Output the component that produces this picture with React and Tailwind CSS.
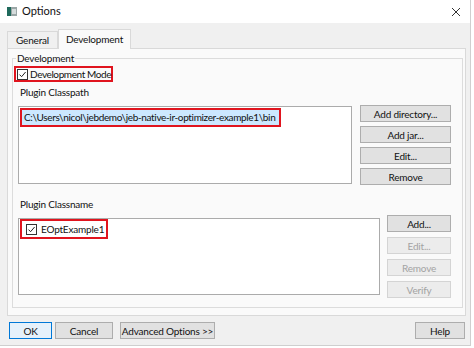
import React from "react";

const font = { fontFamily: 'Lato, "Noto Sans", sans-serif' };

function Check({ checked = true }) {
  return (
    <span className="inline-flex h-[11px] w-[11px] shrink-0 items-center justify-center border border-[#333] bg-white">
      {checked && (
        <svg width="9" height="9" viewBox="0 0 9 9">
          <path d="M1.5 4.6 L3.6 6.7 L7.6 2" fill="none" stroke="#222" strokeWidth="1" />
        </svg>
      )}
    </span>
  );
}

function Btn({ children, disabled, className = "" }) {
  return (
    <button
      className={`flex h-[17px] items-center justify-center whitespace-nowrap border text-[10px] leading-none tracking-[-0.2px] ${
        disabled
          ? "border-[#d4d4d4] bg-[#ececec] text-[#a3a3a3]"
          : "border-[#adadad] bg-[#e1e1e1] text-[#111]"
      } ${className}`}
    >
      {children}
    </button>
  );
}

export default function App() {
  return (
    <div className="h-[348px] w-[474px] overflow-hidden bg-white text-[10px] tracking-[-0.2px] text-[#111]" style={font}>
      <div className="flex w-[471px] flex-col border-r border-b border-[#cfcfcf]">
        {/* TITLE BAR */}
        <div className="flex h-[23px] items-center bg-white pl-[7px] pr-[9px]">
          <svg width="10" height="9" viewBox="0 0 10 9">
            <rect x="0" y="0" width="10" height="9" fill="#9aa6a6" />
            <rect x="0" y="0" width="4" height="9" fill="#1f6a5c" />
            <rect x="5" y="2" width="4" height="5" fill="#d5dcdc" />
          </svg>
          <span className="ml-[5px] text-[11px] tracking-normal">Options</span>
          <svg className="ml-auto" width="10" height="10" viewBox="0 0 10 10">
            <path d="M1 1 L9 9 M9 1 L1 9" stroke="#333" strokeWidth="1" />
          </svg>
        </div>

        {/* BODY */}
        <div className="flex h-[322px] flex-col bg-[#f0f0f0] pl-[7px] pr-[4px] pt-[6px]">
          {/* TABS */}
          <div className="flex h-[19px] items-end whitespace-nowrap">
            <div className="flex h-[17px] w-[51px] items-center justify-center border border-b-0 border-[#d9d9d9] bg-[#f0f0f0]">
              General
            </div>
            <div className="relative -mb-px flex h-[20px] w-[73px] items-center justify-center border border-b-0 border-[#d9d9d9] bg-[#fafafa]">
              Development
            </div>
          </div>

          {/* PANEL */}
          <div className="h-[268px] w-[459px] border border-[#d9d9d9] bg-[#fafafa] pl-[4px] pr-[2px] pt-[3px]">
            <fieldset className="h-[256px] border border-[#dcdcdc]">
              <legend className="ml-[3px] px-[1px] leading-[12px]">Development</legend>

              <div className="ml-px mt-[2px] flex h-[16px] w-[99px] items-center border-2 border-[#e0141e] pl-[1px]">
                <Check />
                <span className="ml-[2px] whitespace-nowrap tracking-[-0.4px]">Development Mode</span>
              </div>

              <div className="ml-[7px] mt-[4px] h-[13px] leading-[13px]">Plugin Classpath</div>

              <div className="ml-[5px] mt-[6px] flex">
                <div className="mt-px h-[78px] w-[334px] border border-[#ababab] bg-white">
                  <div className="ml-px mt-px flex h-[19px] w-[261px] items-center border-2 border-[#e0141e] bg-[#cce8ff] pl-[2px] whitespace-nowrap tracking-[-0.35px]">
                    C:\Users\nicol\jebdemo\jeb-native-ir-optimizer-example1\bin
                  </div>
                </div>
                <div className="ml-[8px] flex w-[91px] flex-col gap-[4px]">
                  <Btn>Add directory...</Btn>
                  <Btn>Add jar...</Btn>
                  <Btn>Edit...</Btn>
                  <Btn>Remove</Btn>
                </div>
              </div>

              <div className="ml-[7px] mt-[13px] h-[13px] leading-[13px]">Plugin Classname</div>

              <div className="ml-[5px] mt-[4px] flex">
                <div className="mt-[3px] h-[77px] w-[362px] border border-[#ababab] bg-white">
                  <div className="ml-px flex h-[20px] w-[88px] items-center border-2 border-[#e0141e] pl-[4px]">
                    <Check />
                    <span className="ml-[4px] whitespace-nowrap">EOptExample1</span>
                  </div>
                </div>
                <div className="ml-[7px] flex w-[64px] flex-col gap-[5px]">
                  <Btn>Add...</Btn>
                  <Btn disabled>Edit...</Btn>
                  <Btn disabled>Remove</Btn>
                  <Btn disabled>Verify</Btn>
                </div>
              </div>
            </fieldset>
          </div>

          {/* FOOTER */}
          <div className="mt-[6px] flex">
            <Btn className="ml-[2px] w-[43px] !border-[#0078d7] !bg-[#e5f1fb]">OK</Btn>
            <Btn className="ml-[3px] w-[58px]">Cancel</Btn>
            <Btn className="ml-[7px] w-[95px]">Advanced Options &gt;&gt;</Btn>
            <Btn className="ml-auto mr-[1px] w-[50px]">Help</Btn>
          </div>
        </div>
      </div>
    </div>
  );
}
